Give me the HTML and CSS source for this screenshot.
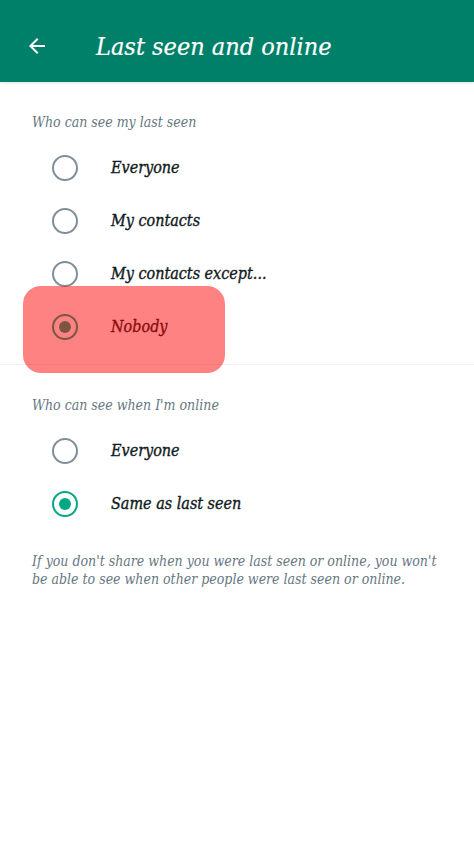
FILE: index.html
```html
<!DOCTYPE html>
<html>
<head>
<meta charset="utf-8">
<link rel="stylesheet" href="styles.css">
</head>
<body>
<header class="topbar">
  <svg class="back" width="24" height="24" viewBox="0 0 24 24"><path d="M20 11H7.83l5.59-5.59L12 4l-8 8 8 8 1.41-1.41L7.83 13H20v-2z" fill="#fff"/></svg>
  <h1 class="title">Last seen and online</h1>
</header>
<main>
  <section class="group">
    <div class="caption">Who can see my last seen</div>
    <div class="options">
      <div class="row"><span class="radio"></span><span class="label">Everyone</span></div>
      <div class="row"><span class="radio"></span><span class="label">My contacts</span></div>
      <div class="row"><span class="radio"></span><span class="label">My contacts except...</span></div>
      <div class="row"><span class="radio checked"></span><span class="label">Nobody</span><div class="highlight"></div></div>
    </div>
  </section>
  <div class="divider"></div>
  <section class="group">
    <div class="caption">Who can see when I'm online</div>
    <div class="options">
      <div class="row"><span class="radio"></span><span class="label">Everyone</span></div>
      <div class="row"><span class="radio checked"></span><span class="label">Same as last seen</span></div>
    </div>
  </section>
  <p class="note">If you don't share when you were last seen or online, you won't be able to see when other people were last seen or online.</p>
</main>
</body>
</html>
```
FILE: styles.css
```css
* { box-sizing: border-box; }
body {
  margin: 0;
  background: #fff;
  font-family: "DejaVu Serif Condensed", "DejaVu Serif", "Liberation Serif", serif;
  font-stretch: condensed;
  font-style: italic;
}
.topbar {
  height: 82px;
  background: #008069;
  display: flex;
  align-items: center;
  padding: 10px 0 0 25px;
  box-shadow: 0 1px 3px rgba(0,0,0,0.12);
  position: relative;
  z-index: 1;
}
.back { width: 24px; height: 24px; }
.title {
  margin: 0 0 0 47px;
  color: #fff;
  font-size: 25px;
  font-weight: normal;
  -webkit-text-stroke: 0.2px #fff;
}
.group { padding-top: 30px; }
.caption {
  padding-left: 32px;
  font-size: 14px;
  color: #667781;
  height: 20px;
  line-height: 20px;
}
.options { padding-top: 9px; }
.row {
  height: 53px;
  display: flex;
  align-items: center;
  padding-left: 52px;
  position: relative;
}
.radio {
  width: 26px;
  height: 26px;
  border-radius: 50%;
  border: 2.5px solid #7f8f99;
  display: flex;
  align-items: center;
  justify-content: center;
  flex: none;
}
.radio.checked { border-color: #00a884; }
.radio.checked::after {
  content: "";
  width: 12px;
  height: 12px;
  border-radius: 50%;
  background: #00a884;
}
.label {
  margin-left: 33px;
  font-size: 16px;
  color: #111b21;
  -webkit-text-stroke: 0.35px #111b21;
}
.highlight {
  position: absolute;
  left: 23px;
  top: -14px;
  width: 202px;
  height: 87px;
  border-radius: 18px;
  background: rgba(255, 0, 0, 0.49);
  z-index: 1;
}
.divider {
  height: 1px;
  background: #eef0f2;
  margin-top: 11px;
}
.note {
  margin: 22px 0 0 0;
  padding: 0 28px 0 32px;
  font-size: 14px;
  line-height: 18px;
  color: #667781;
}
```
